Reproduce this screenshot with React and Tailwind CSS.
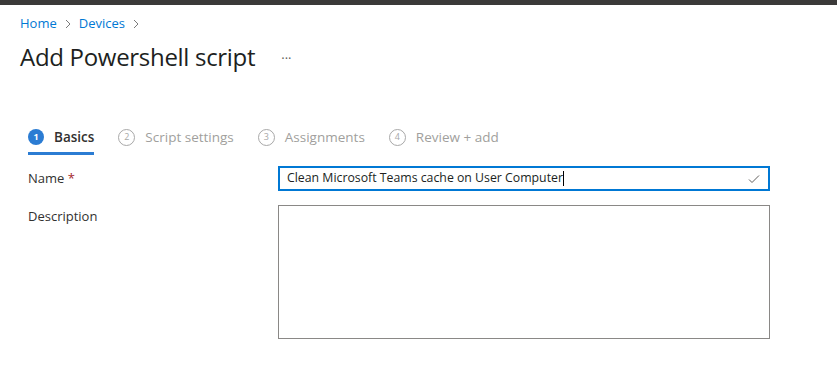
export default function App() {
  const font = { fontFamily: '"Open Sans", "Noto Sans", sans-serif' };
  const steps = [
    { n: 1, label: "Basics", active: true },
    { n: 2, label: "Script settings" },
    { n: 3, label: "Assignments" },
    { n: 4, label: "Review + add" },
  ];
  return (
    <div className="w-[837px] h-[389px] bg-white overflow-hidden" style={font}>
      <div className="h-[5px] bg-[#3b3a39]" />
      <div className="pl-[20px] pt-[15px] flex items-center text-[13px] text-[#0078d4] h-[23px]">
        <span>Home</span>
        <span className="mx-[7px]">
          <svg width="8" height="10" viewBox="0 0 8 10"><path d="M2 1l4 4-4 4" fill="none" stroke="#7a7a7a" strokeWidth="1" /></svg>
        </span>
        <span>Devices</span>
        <span className="mx-[7px]">
          <svg width="8" height="10" viewBox="0 0 8 10"><path d="M2 1l4 4-4 4" fill="none" stroke="#7a7a7a" strokeWidth="1" /></svg>
        </span>
      </div>
      <div className="pl-[20px] mt-[13px] flex items-center h-[32px]">
        <h1 className="text-[24px] text-[#201f1e] tracking-[-0.3px]">Add Powershell script</h1>
        <span className="ml-[26px] text-[#605e5c] text-[13px] leading-none mt-[2px]">···</span>
      </div>
      <div className="mt-[55px] pl-[28px] flex items-start h-[28px]">
        {steps.map((s) => (
          <div key={s.n} className="flex flex-col mr-[24px]">
            <div className="flex items-center h-[18px]">
              {s.active ? (
                <span className="w-[16px] h-[16px] rounded-full bg-[#2b7cd3] text-white text-[9px] font-bold flex items-center justify-center">{s.n}</span>
              ) : (
                <span className="w-[17px] h-[17px] rounded-full border border-[#a8a8a8] text-[#a8a8a8] text-[9px] flex items-center justify-center">{s.n}</span>
              )}
              <span className={"ml-[10px] text-[13.5px] " + (s.active ? "text-[#323130] font-semibold" : "text-[#a19f9d]")}>{s.label}</span>
            </div>
            {s.active && <div className="mt-[6px] h-[3px] bg-[#2b7cd3]" />}
          </div>
        ))}
      </div>
      <div className="mt-[10px] flex items-center pl-[28px] h-[25px]">
        <div className="w-[250px] text-[13px] text-[#323130]">
          Name <span className="text-[#a4262c]">*</span>
        </div>
        <div className="w-[492px] h-[25px] border-2 border-[#0078d4] flex items-center px-[7px] text-[12.3px] text-[#201f1e]">
          <span>Clean Microsoft Teams cache on User Computer</span>
          <span className="w-[1px] h-[15px] bg-black" />
          <span className="ml-auto mr-[1px]">
            <svg width="12" height="10" viewBox="0 0 12 10"><path d="M1 5.5l3 3 7-7" fill="none" stroke="#605e5c" strokeWidth="1" /></svg>
          </span>
        </div>
      </div>
      <div className="mt-[14px] flex items-start pl-[28px]">
        <div className="w-[250px] text-[13px] text-[#323130] pt-[2px]">Description</div>
        <div className="w-[492px] h-[134px] border border-[#8a8886]" />
      </div>
    </div>
  );
}
